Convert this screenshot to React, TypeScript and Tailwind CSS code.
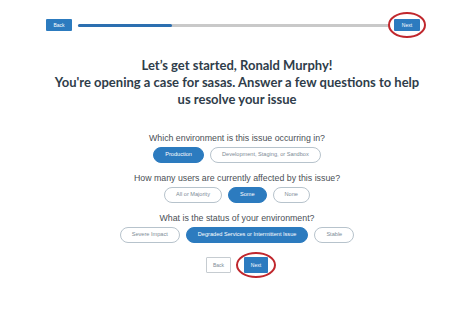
const BLUE = "bg-[#2c7bbf]"

const QUESTIONS = [
  {
    text: "Which environment is this issue occurring in?",
    options: ["Production", "Development, Staging, or Sandbox"],
    selected: 0,
  },
  {
    text: "How many users are currently affected by this issue?",
    options: ["All or Majority", "Some", "None"],
    selected: 1,
  },
  {
    text: "What is the status of your environment?",
    options: ["Severe Impact", "Degraded Services or Intermittent Issue", "Stable"],
    selected: 1,
  },
]

function Pill({ label, active }: { label: string; active: boolean }) {
  return (
    <button
      className={
        active
          ? "h-[16px] rounded-full border border-[#2c7bbf] bg-[#2c7bbf] px-[11px] text-[5.6px] leading-none text-white"
          : "h-[16px] rounded-full border border-[#b7c3cc] bg-white px-[11px] text-[5.6px] leading-none text-[#7d8b96]"
      }
    >
      {label}
    </button>
  )
}

export default function App() {
  return (
    <div className="relative h-[309px] w-[474px] overflow-hidden bg-white font-['Liberation_Sans',Arial,sans-serif]">
      {/* Top bar */}
      <div className="flex h-[31px] items-end pl-[46px] pr-[54px]">
        <div className="flex h-[12px] w-full items-center">
          <button className={`h-[12px] w-[26px] rounded-[1px] ${BLUE} text-[5px] leading-none text-white`}>
            Back
          </button>
          <div className="ml-[6px] h-[3px] flex-1 rounded-full bg-[#c9c9c9]">
            <div className="h-full w-[30%] rounded-full bg-[#2c6fb0]" />
          </div>
          <div className="relative ml-[4px] flex">
            <button className={`h-[12px] w-[26px] rounded-[1px] ${BLUE} text-[5px] leading-none text-white`}>
              Next
            </button>
            <div className="pointer-events-none absolute -inset-x-[6px] -inset-y-[7px] rounded-[50%] border-2 border-[#c0272d]" />
          </div>
        </div>
      </div>

      {/* Heading */}
      <div className="mt-[26px] text-center font-['Lato',sans-serif] text-[13px] font-bold leading-[17px] text-[#2f3d4a]">
        <div>Let’s get started, Ronald Murphy!</div>
        <div>You're opening a case for sasas. Answer a few questions to help</div>
        <div>us resolve your issue</div>
      </div>

      {/* Questions */}
      <div className="mt-[24px] flex flex-col items-center">
        {QUESTIONS.map((q, i) => (
          <div key={i} className="flex flex-col items-center">
            <p className="text-[8.8px] leading-[12px] text-[#4a4f55]">{q.text}</p>
            <div className="mb-[9px] mt-[3px] flex gap-[6px]">
              {q.options.map((o, j) => (
                <Pill key={o} label={o} active={j === q.selected} />
              ))}
            </div>
          </div>
        ))}

        {/* Bottom nav */}
        <div className="mt-[5px] flex items-center gap-[13px]">
          <button className="h-[16px] w-[25px] rounded-[1px] border border-[#c6ccd1] bg-white text-[5px] leading-none text-[#7d8b96]">
            Back
          </button>
          <div className="relative flex">
            <button className={`h-[16px] w-[24px] rounded-[1px] ${BLUE} text-[5px] leading-none text-white`}>
              Next
            </button>
            <div className="pointer-events-none absolute -inset-x-[8px] -inset-y-[5px] rounded-[50%] border-2 border-[#c0272d]" />
          </div>
        </div>
      </div>
    </div>
  )
}
